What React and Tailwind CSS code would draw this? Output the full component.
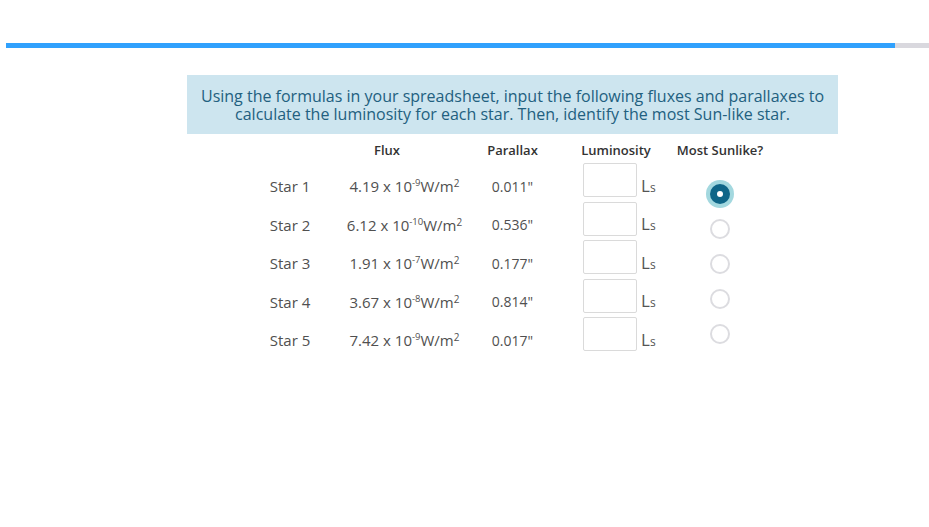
import React from "react";

const rows = [
  { star: "Star 1", m: "4.19", e: "-9", p: "0.011\"" },
  { star: "Star 2", m: "6.12", e: "-10", p: "0.536\"" },
  { star: "Star 3", m: "1.91", e: "-7", p: "0.177\"" },
  { star: "Star 4", m: "3.67", e: "-8", p: "0.814\"" },
  { star: "Star 5", m: "7.42", e: "-9", p: "0.017\"" },
];

export default function App() {
  return (
    <div className="w-[929px] h-[527px] bg-white overflow-hidden" style={{ fontFamily: '"Open Sans", sans-serif' }}>
      <div className="pt-[43px] pl-[6px] flex">
        <div className="h-[5px] w-[889px] bg-[#30a1fd]" />
        <div className="h-[5px] flex-1 bg-[#d9d8de]" />
      </div>
      <div className="ml-[187px] w-[651px] mt-[27px]">
        <div className="h-[59px] bg-[#cde5ef] flex flex-col items-center justify-center text-[16px] leading-[18px] text-[#22607f] text-center">
          <div>Using the formulas in your spreadsheet, input the following fluxes and parallaxes to</div>
          <div>calculate the luminosity for each star. Then, identify the most Sun-like star.</div>
        </div>
        <div className="mt-[6px] ml-[63px] flex">
          <div className="flex flex-col">
            <div className="flex h-[23px] text-[13px] font-semibold text-[#333] leading-[20px]">
              <div className="w-[80px]" />
              <div className="w-[145px] text-center pr-[31px]">Flux</div>
              <div className="w-[75px] text-center">Parallax</div>
              <div className="w-[114px] text-center pl-[18px]">Luminosity</div>
            </div>
            {rows.map((r) => (
              <div key={r.star} className="flex h-[38.5px] text-[#505050]">
                <div className="w-[80px] flex items-center justify-center pt-[8px] text-[15px]">{r.star}</div>
                <div className="w-[145px] flex items-center justify-center pt-[8px] text-[15px] pl-[4px]">
                  <span className="whitespace-nowrap">
                    {r.m} x 10<sup className="text-[9.5px] -top-[6px]">{r.e}</sup>W/m<sup className="text-[10px] -top-[5px]">2</sup>
                  </span>
                </div>
                <div className="w-[75px] flex items-center justify-center pt-[8px] text-[14px]">{r.p}</div>
                <div className="w-[114px] flex items-end pl-[33px]">
                  <div className="w-[54px] h-[34px] border border-[#dadada] rounded-[2px] bg-white mb-[4.5px]" />
                  <div className="ml-[4px] mb-[8px] leading-none text-[#555]">
                    <span className="text-[17px]">L</span>
                    <span className="text-[12px]">s</span>
                  </div>
                </div>
              </div>
            ))}
          </div>
          <div className="flex flex-col w-[102px] ml-[5px]">
            <div className="h-[20px] text-[13px] font-semibold text-[#333] leading-[20px] text-center">Most Sunlike?</div>
            <div className="h-[16.5px]" />
            {rows.map((r, i) => (
              <div key={r.star} className="h-[35px] flex items-center justify-center">
                {i === 0 ? (
                  <div className="w-[28px] h-[28px] rounded-full bg-[#a3d8df] flex items-center justify-center">
                    <div className="w-[20px] h-[20px] rounded-full bg-[#0f6688] flex items-center justify-center">
                      <div className="w-[6px] h-[6px] rounded-full bg-white" />
                    </div>
                  </div>
                ) : (
                  <div className="w-[20px] h-[20px] rounded-full border-2 border-[#dcdce0] bg-white" />
                )}
              </div>
            ))}
          </div>
        </div>
      </div>
    </div>
  );
}
